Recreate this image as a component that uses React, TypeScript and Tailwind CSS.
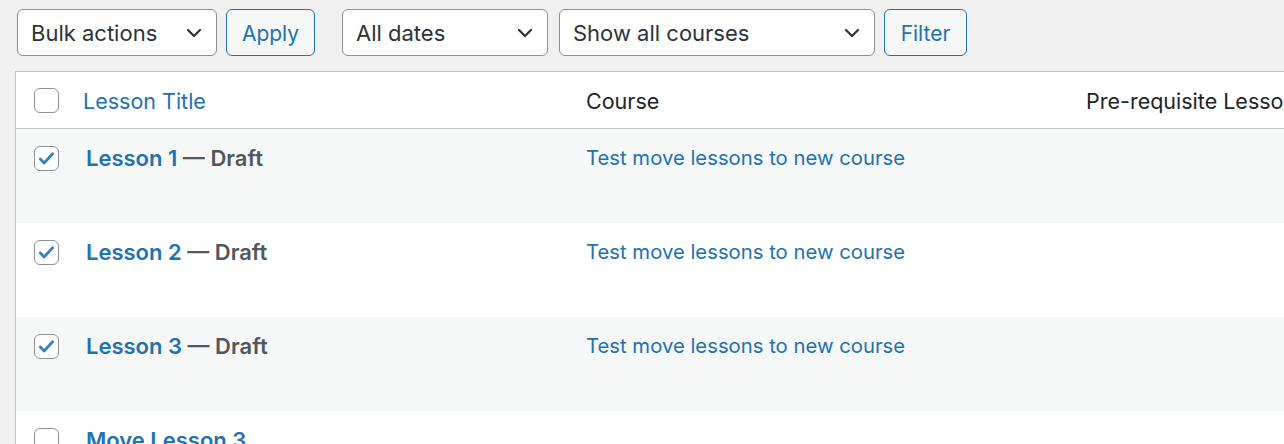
import React from "react";

const font = { fontFamily: 'Inter, "Noto Sans", "Liberation Sans", sans-serif' };

function Chevron() {
  return (
    <svg width="16" height="10" viewBox="0 0 16 10" fill="none">
      <path d="M2 2l6 6 6-6" stroke="#2c3338" strokeWidth="2.2" strokeLinecap="round" strokeLinejoin="round" />
    </svg>
  );
}

function Select({ label, w }: { label: string; w: string }) {
  return (
    <div className={`flex h-[47px] shrink-0 ${w} items-center justify-between rounded-[6px] border border-[#8c8f94] bg-white pl-[13px] pr-[14px] text-[22px] text-[#2c3338]`}>
      <span className="pt-[2px]">{label}</span>
      <Chevron />
    </div>
  );
}

function Btn({ label, w }: { label: string; w: string }) {
  return (
    <div className={`flex h-[47px] shrink-0 ${w} items-center justify-center rounded-[6px] border border-[#2271b1] bg-[#f6f7f7] pt-[2px] text-[21px] text-[#2271b1]`}>
      {label}
    </div>
  );
}

function Check({ checked }: { checked: boolean }) {
  return (
    <div className="flex h-[25px] w-[25px] items-center justify-center rounded-[6px] border border-[#8c8f94] bg-white">
      {checked && (
        <svg width="19" height="19" viewBox="0 0 20 20">
          <path d="M3.5 10.5l4 4.2L16.5 5" fill="none" stroke="#3582c4" strokeWidth="3" strokeLinecap="round" strokeLinejoin="round" />
        </svg>
      )}
    </div>
  );
}

const rows = [
  { title: "Lesson 1", draft: true, checked: true, gray: true },
  { title: "Lesson 2", draft: true, checked: true, gray: false },
  { title: "Lesson 3", draft: true, checked: true, gray: true },
  { title: "Move Lesson 3", draft: false, checked: false, gray: false },
];

export default function App() {
  return (
    <div className="h-[444px] w-[1284px] overflow-hidden bg-[#f0f0f1]" style={font}>
      <div className="flex items-center pl-[17px] pt-[9px]">
        <Select label="Bulk actions" w="w-[200px]" />
        <div className="w-[9px] shrink-0" />
        <Btn label="Apply" w="w-[89px]" />
        <div className="w-[27px] shrink-0" />
        <Select label="All dates" w="w-[206px]" />
        <div className="w-[11px] shrink-0" />
        <Select label="Show all courses" w="w-[316px]" />
        <div className="w-[9px] shrink-0" />
        <Btn label="Filter" w="w-[83px]" />
      </div>
      <div className="ml-[15px] mt-[15px] border-l border-t border-[#c3c4c7] bg-white">
        <div className="flex h-[57px] items-center overflow-hidden border-b border-[#c3c4c7] text-[21.5px]">
          <div className="w-[67px] shrink-0 pl-[18px]">
            <Check checked={false} />
          </div>
          <div className="w-[503px] shrink-0 pt-[3px] text-[#2271b1]">Lesson Title</div>
          <div className="w-[500px] shrink-0 pt-[3px] text-[#1d2327]">Course</div>
          <div className="shrink-0 whitespace-nowrap pt-[3px] text-[#1d2327]">Pre-requisite Lesson</div>
        </div>
        {rows.map((r, i) => (
          <div key={i} className={`flex h-[94px] items-start ${r.gray ? "bg-[#f6f7f7]" : "bg-white"}`}>
            <div className="w-[67px] shrink-0 pl-[18px] pt-[17px]">
              <Check checked={r.checked} />
            </div>
            <div className="w-[503px] shrink-0 pl-[3px] pt-[14px] text-[22px] font-semibold leading-[30px]">
              <span className="text-[#2271b1]">{r.title}</span>
              {r.draft && <span className="text-[#50575e]"> — Draft</span>}
            </div>
            <div className="pt-[14px] text-[20.3px] leading-[30px] text-[#2271b1]">
              {r.draft ? "Test move lessons to new course" : ""}
            </div>
          </div>
        ))}
      </div>
    </div>
  );
}
